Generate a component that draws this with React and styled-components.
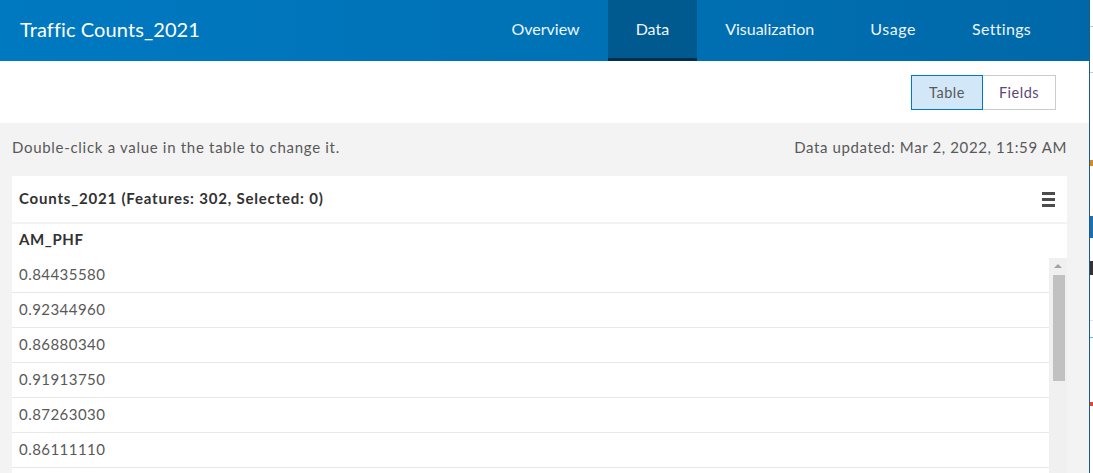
import styled, { createGlobalStyle } from "styled-components";

const GlobalStyle = createGlobalStyle`
  html, body {
    margin: 0;
    padding: 0;
    width: 1093px;
    height: 473px;
    overflow: hidden;
    background: #ffffff;
    font-family: Lato, "Open Sans", Arial, sans-serif;
  }
  * {
    box-sizing: border-box;
  }
`;

const tabs = [
  { label: "Overview", spacing: 0 },
  { label: "Data", spacing: 0 },
  { label: "Visualization", spacing: 0 },
  { label: "Usage", spacing: 0.6 },
  { label: "Settings", spacing: 0.3 },
];
const values = [
  "0.84435580",
  "0.92344960",
  "0.86880340",
  "0.91913750",
  "0.87263030",
  "0.86111110",
];

export default function App() {
  return (
    <>
      <GlobalStyle />
      <Screen>
        <Page>
          <TopBar>
            <Title>Traffic Counts_2021</Title>
            <Nav>
              {tabs.map((t) => (
                <NavItem
                  key={t.label}
                  $active={t.label === "Data"}
                  $spacing={t.spacing}
                >
                  {t.label}
                </NavItem>
              ))}
            </Nav>
          </TopBar>
          <Toolbar>
            <Segmented>
              <Segment $active>Table</Segment>
              <Segment>Fields</Segment>
            </Segmented>
          </Toolbar>
          <Body>
            <InfoRow>
              <InfoText $spacing={0.7}>
                Double-click a value in the table to change it.
              </InfoText>
              <InfoText $spacing={0.62}>
                Data updated: Mar 2, 2022, 11:59 AM
              </InfoText>
            </InfoRow>
            <Card>
              <CardHeader>
                <CardTitle>Counts_2021 (Features: 302, Selected: 0)</CardTitle>
                <Menu>
                  <i />
                  <i />
                  <i />
                </Menu>
              </CardHeader>
              <ColumnHeader>AM_PHF</ColumnHeader>
              <Grid>
                <Rows>
                  {values.map((v, i) => (
                    <Row key={i}>{v}</Row>
                  ))}
                  <EmptyRow />
                </Rows>
                <Scrollbar>
                  <Arrow />
                  <Thumb />
                </Scrollbar>
              </Grid>
            </Card>
          </Body>
        </Page>
        <Sliver>
          <Mark $top={26} $color="#c8c8c8" $h={1} />
          <Mark $top={72} $color="#c8c8c8" $h={1} />
          <Mark $top={160} $color="#d08a2c" $h={6} />
          <Mark $top={216} $color="#1b6fae" $h={22} />
          <Mark $top={261} $color="#333333" $h={14} />
          <Mark $top={320} $color="#d8e6f2" $h={1} />
          <Mark $top={337} $color="#7fb0d8" $h={1} />
          <Mark $top={402} $color="#e0453a" $h={4} />
        </Sliver>
      </Screen>
    </>
  );
}

const Screen = styled.div`
  display: flex;
  width: 1093px;
  height: 473px;
  overflow: hidden;
`;

const Page = styled.div`
  width: 1089px;
  flex: none;
  display: flex;
  flex-direction: column;
  background: #f3f3f3;
`;

const TopBar = styled.header`
  height: 61px;
  flex: none;
  display: flex;
  align-items: stretch;
  justify-content: space-between;
  background: linear-gradient(90deg, #0079c1 0%, #0072b6 50%, #0068a8 100%);
  color: #ffffff;
`;

const Title = styled.div`
  display: flex;
  align-items: center;
  padding-left: 20px;
  padding-bottom: 3px;
  font-size: 20px;
  letter-spacing: 0.1px;
`;

const Nav = styled.nav`
  display: flex;
  align-items: stretch;
  padding-right: 30px;
`;

const NavItem = styled.div`
  display: flex;
  align-items: center;
  padding: 0 28px 1px;
  font-size: 16px;
  letter-spacing: ${(p) => p.$spacing}px;
  color: #eef6fc;
  background: ${(p) => (p.$active ? "#005a8f" : "transparent")};
  border-bottom: 3px solid ${(p) => (p.$active ? "#00304f" : "transparent")};
`;

const Toolbar = styled.div`
  height: 62px;
  flex: none;
  display: flex;
  align-items: center;
  justify-content: flex-end;
  padding-right: 33px;
  background: #ffffff;
`;

const Segmented = styled.div`
  display: flex;
  margin-top: 1px;
`;

const Segment = styled.div`
  height: 35px;
  display: flex;
  align-items: center;
  justify-content: center;
  width: ${(p) => (p.$active ? "72px" : "73px")};
  padding-bottom: 1px;
  font-size: 14.5px;
  letter-spacing: 0.5px;
  color: ${(p) => (p.$active ? "#595959" : "#5b4779")};
  background: ${(p) => (p.$active ? "#d2e8f8" : "#ffffff")};
  border: 1px solid ${(p) => (p.$active ? "#0079c1" : "#cccccc")};
  border-left-width: ${(p) => (p.$active ? "1px" : "0")};
`;

const Body = styled.main`
  flex: 1;
  padding: 0 22px 0 12px;
`;

const InfoRow = styled.div`
  height: 53px;
  display: flex;
  align-items: center;
  justify-content: space-between;
  padding-bottom: 5px;
`;

const InfoText = styled.span`
  font-size: 15px;
  letter-spacing: ${(p) => p.$spacing}px;
  color: #595959;
`;

const Card = styled.section`
  display: flex;
  flex-direction: column;
  gap: 2px;
`;

const CardHeader = styled.div`
  height: 46px;
  display: flex;
  align-items: center;
  justify-content: space-between;
  padding: 0 12px 2px 7px;
  background: #ffffff;
`;

const CardTitle = styled.div`
  font-size: 15px;
  font-weight: 700;
  letter-spacing: 0.8px;
  color: #323232;
`;

const Menu = styled.div`
  display: flex;
  flex-direction: column;
  gap: 3px;
  margin-top: 2px;

  i {
    display: block;
    width: 13px;
    height: 3px;
    background: #4c4c4c;
  }
`;

const ColumnHeader = styled.div`
  height: 34px;
  display: flex;
  align-items: center;
  padding: 0 7px 4px;
  background: #ffffff;
  font-size: 15px;
  font-weight: 700;
  letter-spacing: 0.6px;
  color: #323232;
`;

const Grid = styled.div`
  display: flex;
  margin-top: -2px;
  background: #ffffff;
`;

const Rows = styled.div`
  flex: 1;
`;

const Row = styled.div`
  height: 35px;
  display: flex;
  align-items: center;
  padding: 0 7px 3px;
  border-bottom: 1px solid #e8e8e8;
  font-size: 15px;
  letter-spacing: 0.45px;
  color: #595959;
`;

const EmptyRow = styled.div`
  height: 35px;
`;

const Scrollbar = styled.div`
  width: 18px;
  flex: none;
  display: flex;
  flex-direction: column;
  align-items: center;
  padding-top: 6px;
  background: #f0f0f0;
`;

const Arrow = styled.div`
  width: 0;
  height: 0;
  border-left: 4px solid transparent;
  border-right: 4px solid transparent;
  border-bottom: 4px solid #a3a3a3;
  margin-bottom: 7px;
`;

const Thumb = styled.div`
  width: 12px;
  height: 106px;
  margin-left: 1px;
  background: #c1c1c1;
`;

const Sliver = styled.div`
  position: relative;
  flex: 1;
  background: #ffffff;
  border-left: 1px solid #1d5a86;
`;

const Mark = styled.div`
  position: absolute;
  left: 0;
  right: 0;
  top: ${(p) => p.$top}px;
  height: ${(p) => p.$h}px;
  background: ${(p) => p.$color};
`;
